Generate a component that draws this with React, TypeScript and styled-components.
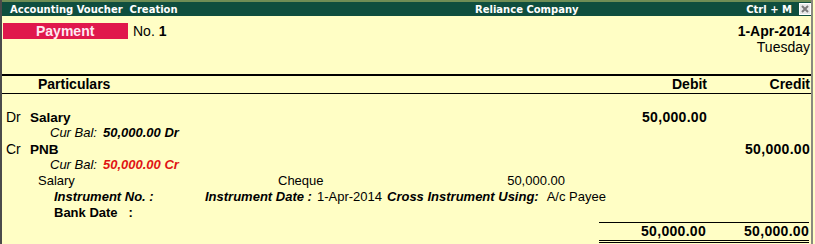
import React from 'react';
import styled, { createGlobalStyle } from 'styled-components';

const GlobalStyle = createGlobalStyle`
  html, body {
    margin: 0;
    padding: 0;
    background: #fffec5;
  }
  body {
    font-family: "Liberation Sans", Arial, sans-serif;
    color: #000;
  }
`;

const Window = styled.div`
  width: 813px;
  height: 244px;
  box-sizing: border-box;
  border-left: 2px solid #4b4b4b;
  border-right: 2px solid #8a8a80;
  background: #fffec5;
  display: flex;
  flex-direction: column;
  overflow: hidden;
`;

const TitleBar = styled.div`
  height: 14px;
  border-top: 2px solid #6f8d55;
  background: #0f4e3e;
  color: #fff;
  font: bold 10px "DejaVu Sans", Verdana, sans-serif;
  display: grid;
  grid-template-columns: 465px 1fr auto;
  align-items: center;
  padding-left: 8px;
  white-space: pre;
`;

const TitleRight = styled.div`
  display: flex;
  align-items: center;
  gap: 7px;
`;

const CloseBox = styled.span`
  width: 10px;
  height: 10px;
  background: #e8e8e8;
  border: 1px solid #fff;
  display: flex;
  align-items: center;
  justify-content: center;
  svg {
    display: block;
  }
`;

const VoucherHead = styled.div`
  height: 51px;
  display: flex;
  justify-content: space-between;
  align-items: flex-start;
  padding: 7px 1px 0 1px;
  font-size: 14px;
`;

const VoucherType = styled.div`
  display: flex;
  align-items: center;
  gap: 5px;
  line-height: 16px;
`;

const TypeBadge = styled.span`
  width: 125px;
  height: 16px;
  background: #e0184c;
  color: #ffe8f2;
  font-weight: bold;
  padding-left: 33px;
  box-sizing: border-box;
`;

const DateBlock = styled.div`
  text-align: right;
  line-height: 16px;
  b {
    display: block;
  }
`;

const columns = 'grid-template-columns: 1fr 107px 103px;';

const TableHead = styled.div`
  ${columns}
  display: grid;
  height: 17px;
  line-height: 17px;
  border-top: 2px solid #000;
  border-bottom: 1px solid #000;
  padding-right: 1px;
  font-size: 14px;
  font-weight: bold;
`;

const HeadCell = styled.div<{ $right?: boolean }>`
  text-align: ${(p) => (p.$right ? 'right' : 'left')};
  padding-left: ${(p) => (p.$right ? 0 : 36)}px;
`;

const Body = styled.div`
  padding-top: 15px;
  padding-right: 1px;
`;

const Row = styled.div`
  ${columns}
  display: grid;
  height: 16px;
  line-height: 16px;
  font-size: 14px;
`;

const LedgerCell = styled.div`
  padding-left: 4px;
  b {
    font-size: 13.5px;
  }
`;

const DrCr = styled.span`
  display: inline-block;
  width: 24px;
`;

const Amount = styled.div`
  text-align: right;
  font-weight: bold;
  letter-spacing: 0.3px;
`;

const SubRow = styled.div<{ $indent: number }>`
  height: 16px;
  line-height: 16px;
  font-size: 13px;
  padding-left: ${(p) => p.$indent}px;
  white-space: pre;
`;

const BalLabel = styled.i``;

const BalValue = styled.b<{ $red?: boolean }>`
  font-style: italic;
  margin-left: 6px;
  color: ${(p) => (p.$red ? '#e01414' : '#000')};
`;

const BankLine = styled(SubRow)`
  display: grid;
  grid-template-columns: 240px 150px 137px;
`;

const InstrumentLine = styled(SubRow)`
  display: grid;
  grid-template-columns: 151px 112px 70px auto auto;
  justify-content: start;
`;

const Label = styled.span`
  font-weight: bold;
  font-style: italic;
`;

const Value = styled.span<{ $gap?: number }>`
  padding-left: ${(p) => p.$gap ?? 0}px;
`;

const TotalRow = styled.div`
  ${columns}
  display: grid;
  margin-top: 1px;
  padding-right: 1px;
`;

const TotalCells = styled.div`
  grid-column: 2 / 4;
  display: grid;
  grid-template-columns: 107px 103px;
  height: 17px;
  line-height: 17px;
  border-top: 1px solid #000;
  border-bottom: 3px double #000;
  font-size: 14px;
`;

const entries = [
  { side: 'Dr', ledger: 'Salary', debit: '50,000.00', credit: '', bal: '50,000.00 Dr', red: false },
  { side: 'Cr', ledger: 'PNB', debit: '', credit: '50,000.00', bal: '50,000.00 Cr', red: true },
];

export default function App() {
  return (
    <>
      <GlobalStyle />
      <Window>
        <TitleBar>
          <span>Accounting Voucher  Creation</span>
          <span>Reliance Company</span>
          <TitleRight>
            <span>Ctrl + M</span>
            <CloseBox>
              <svg width="8" height="8" viewBox="0 0 8 8">
                <path d="M1 1L7 7M7 1L1 7" stroke="#7a7a7a" strokeWidth="2" />
              </svg>
            </CloseBox>
          </TitleRight>
        </TitleBar>

        <VoucherHead>
          <VoucherType>
            <TypeBadge>Payment</TypeBadge>
            <span>
              No. <b>1</b>
            </span>
          </VoucherType>
          <DateBlock>
            <b>1-Apr-2014</b>
            <span>Tuesday</span>
          </DateBlock>
        </VoucherHead>

        <TableHead>
          <HeadCell>Particulars</HeadCell>
          <HeadCell $right>Debit</HeadCell>
          <HeadCell $right>Credit</HeadCell>
        </TableHead>

        <Body>
          {entries.map((e) => (
            <React.Fragment key={e.ledger}>
              <Row>
                <LedgerCell>
                  <DrCr>{e.side}</DrCr>
                  <b>{e.ledger}</b>
                </LedgerCell>
                <Amount>{e.debit}</Amount>
                <Amount>{e.credit}</Amount>
              </Row>
              <SubRow $indent={48}>
                <BalLabel>Cur Bal:</BalLabel>
                <BalValue $red={e.red}>{e.bal}</BalValue>
              </SubRow>
            </React.Fragment>
          ))}
          <BankLine $indent={36}>
            <span>Salary</span>
            <span>Cheque</span>
            <span style={{ textAlign: 'right' }}>50,000.00</span>
          </BankLine>
          <InstrumentLine $indent={52}>
            <Label>Instrument No. :</Label>
            <Label>Instrument Date :</Label>
            <Value>1-Apr-2014</Value>
            <Label>Cross Instrument Using:</Label>
            <Value $gap={8}>A/c Payee</Value>
          </InstrumentLine>
          <SubRow $indent={52}>
            <b>Bank Date   :</b>
          </SubRow>
          <TotalRow>
            <TotalCells>
              <Amount>50,000.00</Amount>
              <Amount>50,000.00</Amount>
            </TotalCells>
          </TotalRow>
        </Body>
      </Window>
    </>
  );
}
